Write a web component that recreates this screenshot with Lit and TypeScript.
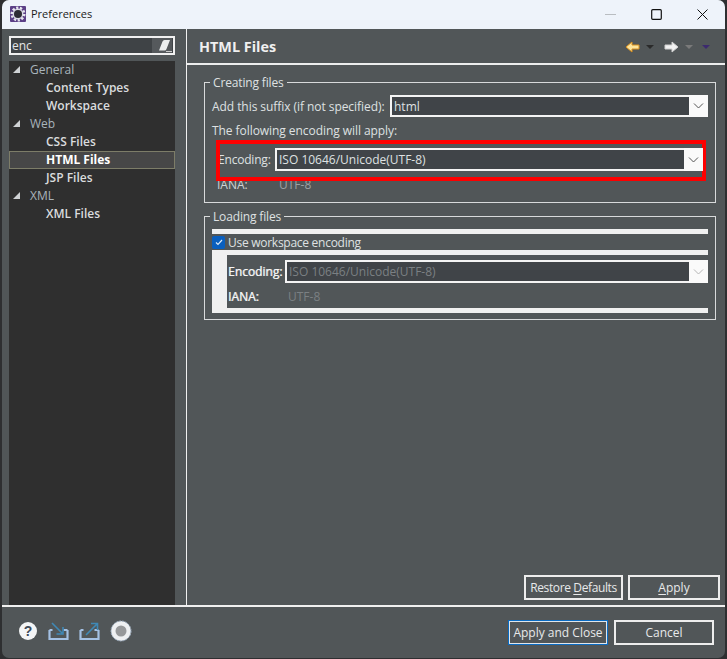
import { LitElement, html, css, svg } from "lit";
import { customElement } from "lit/decorators.js";

const chevron = html`<svg class="chev" width="11" height="6" viewBox="0 0 11 6"><path d="M1 .5l4.5 4.5L10 .5" fill="none" stroke="currentColor"/></svg>`;

const arrowDown = (color: string) => svg`<path d="M0 0h8l-4 4z" fill=${color}/>`;

@customElement("app-root")
export class AppRoot extends LitElement {
  static styles = css`
    :host {
      display: block;
      width: 727px;
      height: 659px;
      overflow: hidden;
      background: #2e2f31;
      font-family: "Open Sans", "Liberation Sans", sans-serif;
      font-size: 12px;
      color: #e4e6e7;
    }
    .window {
      margin-left: 2px;
      width: 723px;
      height: 658px;
      background: #515658;
      display: flex;
      flex-direction: column;
      border-radius: 7px;
      overflow: hidden;
    }
    .titlebar {
      height: 29px;
      flex: none;
      box-sizing: border-box;
      background: #eef3fa;
      display: flex;
      align-items: center;
      color: #1b1b1b;
      padding-left: 8px;
    }
    .titlebar .name { margin: -2px 0 0 5px; font-size: 11px; }
    .titlebar > svg { margin-top: -1px; }
    .winbtns { margin-left: auto; display: flex; }
    .winbtns div { width: 46px; height: 29px; display: flex; align-items: center; justify-content: center; }
    .main { flex: 1; display: flex; min-height: 0; }
    .left {
      width: 185px;
      flex: none;
      box-sizing: border-box;
      padding: 7px 0 0 7px;
      border-right: 1px solid #f0f0f0;
      display: flex;
      flex-direction: column;
    }
    .search {
      width: 166px;
      height: 19px;
      box-sizing: border-box;
      border: 2px solid #f0f0f0;
      background: #3f4346;
      display: flex;
      align-items: center;
      padding-left: 1px;
    }
    .search svg { margin-left: auto; margin-right: 1px; }
    .tree {
      margin-top: 6px;
      width: 166px;
      flex: 1;
      background: #2f2f2f;
    }
    .row { height: 18px; display: flex; align-items: center; box-sizing: border-box; padding-bottom: 2px; }
    .row .tw { width: 7px; margin: 0 10px 0 4px; display: flex; }
    .row.cat { color: #a9b4bb; }
    .row.leaf { padding-left: 37px; font-weight: 600; color: #dadcde; }
    .row.sel { background: #474747; outline: 1px solid #7d7d68; outline-offset: -1px; color: #fff; font-weight: 700; }
    .right { flex: 1; min-width: 0; display: flex; flex-direction: column; }
    .head {
      height: 36px;
      flex: none;
      box-sizing: border-box;
      display: flex;
      align-items: center;
      padding: 0 8px 0 12px;
      font-size: 14.4px;
      font-weight: 700;
      color: #f0f0f0;
      border-bottom: 2px solid #eceded;
    }
    .nav { margin-left: auto; margin-top: 2px; }
    .content { flex: 1; padding: 9px 9px 0 17px; display: flex; flex-direction: column; min-height: 0; }
    fieldset {
      margin: 0;
      padding: 0 7px;
      border: 1px solid #d8dadb;
      min-width: 0;
    }
    legend { padding: 0 3px; margin-left: -2px; line-height: 17px; color: #dfe1e2; letter-spacing: -0.15px; }
    .creating { height: 129px; box-sizing: border-box; }
    .loading { height: 112px; box-sizing: border-box; margin-top: 5px; }
    .combo {
      height: 22px;
      box-sizing: border-box;
      flex: 1;
      min-width: 0;
      display: flex;
      border: 2px solid #f4f4f4;
      border-right: none;
      background: #404448;
      color: #dfe1e2;
      align-items: center;
      padding-left: 2px;
    }
    .combo .text { flex: 1; white-space: nowrap; }
    .combo .btn {
      width: 19px;
      align-self: stretch;
      margin: -2px 0;
      background: #fafafa;
      color: #555;
      display: flex;
      align-items: center;
      justify-content: center;
    }
    .suffix { margin-top: 4px; height: 22px; display: flex; align-items: center; color: #dfe1e2; }
    .suffix .label { width: 178px; flex: none; letter-spacing: -0.06px; }
    .applies { margin-top: 3px; height: 20px; display: flex; align-items: center; color: #dfe1e2; letter-spacing: -0.06px; }
    .highlight {
      position: relative;
      z-index: 1;
      margin: 0 2px 0 4px;
      height: 41px;
      box-sizing: border-box;
      border: 4px solid #fe0000;
      display: flex;
      align-items: center;
    }
    .highlight::after {
      content: "";
      position: absolute;
      left: -4px;
      top: -4px;
      bottom: -4px;
      width: 4px;
      background: #fe0000;
    }
    .highlight .label { width: 57px; flex: none; margin-left: -2px; margin-top: -2px; color: #dfe1e2; letter-spacing: -0.2px; }
    .highlight .combo { height: 23px; margin-right: -1px; margin-top: -2px; }
    .iana { display: flex; height: 18px; align-items: center; padding-left: 5px; margin-top: -6px; color: #cfd2d4; }
    .iana .label { width: 62px; flex: none; }
    .iana .val { color: #9ca1a4; }
    .band { background: #f0f0f0; padding: 5px 0; margin-top: 4px; }
    .checkrow { background: #515658; height: 16px; display: flex; align-items: center; color: #dfe1e2; letter-spacing: -0.27px; }
    .box {
      width: 13px;
      height: 13px;
      border-radius: 2px;
      background: #0a5fbe;
      margin-right: 3px;
      display: flex;
      align-items: center;
      justify-content: center;
    }
    .disabled {
      margin: 5px 0 0 15px;
      background: #515658;
      height: 53px;
      padding-top: 5px;
      box-sizing: border-box;
    }
    .disabled .inner { display: flex; align-items: center; height: 23px; }
    .disabled .label { color: #f5f5f5; text-shadow: 0.6px 0.4px 0 rgba(255, 255, 255, 0.7); }
    .disabled .inner .label { width: 58px; flex: none; padding-left: 1px; box-sizing: border-box; }
    .disabled .combo { height: 23px; color: #7b8083; }
    .disabled .combo .btn { color: #b5b5b5; }
    .disabled .iana { padding-left: 1px; margin-top: 4px; }
    .disabled .iana .label { width: 60px; }
    .disabled .iana .val { color: #7b8083; }
    .actions { margin: auto -4px 0 0; display: flex; justify-content: flex-end; gap: 5px; padding-bottom: 5px; }
    button {
      font: inherit;
      color: #e8e9ea;
      background: #515658;
      border: 2px solid #ededed;
      height: 25px;
      padding: 0;
      box-sizing: border-box;
    }
    button u { text-underline-offset: 2px; }
    .restore { width: 99px; letter-spacing: -0.38px; }
    .apply { width: 92px; }
    .bottom {
      height: 53px;
      flex: none;
      box-sizing: border-box;
      border-top: 2px solid #f0f0f0;
      display: flex;
      align-items: center;
      padding: 0 11px 0 16px;
    }
    .icons { display: flex; align-items: center; gap: 9px; margin-top: -3px; }
    .bottom .btns { margin-left: auto; display: flex; gap: 6px; }
    .applyclose { width: 100px; border-color: #dfe6ec; outline: 1px solid #0a6cc4; outline-offset: -1px; }
    .cancel { width: 100px; }
  `;

  private tray(up: boolean) {
    const arrow = up ? "M7 14L18 3M12 2.5h6.5v6.5" : "M4 2l10 10M15 6v7H8.5";
    return html`<svg width="22" height="20" viewBox="0 0 22 20">
      <path d="M1.5 9v9h18V9M1.5 9h3M15.5 9h4" fill="none" stroke="#a4c1e4" stroke-width="2.2"/>
      <path d=${arrow} fill="none" stroke="#3f88b5" stroke-width="1.6"/>
    </svg>`;
  }

  render() {
    return html`
      <div class="window">
        <div class="titlebar">
          <svg width="16" height="16" viewBox="0 0 16 16">
            <rect width="16" height="16" rx="1" fill="#5b3f86"/>
            <circle cx="8" cy="8" r="6.2" fill="none" stroke="#e6e6ee" stroke-width="2.6" stroke-dasharray="2.2 1.6"/>
            <circle cx="8" cy="8" r="5.4" fill="#d9d9e4"/>
            <circle cx="8" cy="8" r="4" fill="#2c2b33"/>
          </svg>
          <span class="name">Preferences</span>
          <div class="winbtns">
            <div><svg width="11" height="2"><rect width="11" height="1" fill="#b9bdc1"/></svg></div>
            <div><svg width="11" height="11"><rect x=".7" y=".7" width="9.6" height="9.6" rx="1" fill="none" stroke="#111" stroke-width="1.2"/></svg></div>
            <div><svg width="11" height="11"><path d="M.5.5l10 10M10.5.5l-10 10" stroke="#111" fill="none"/></svg></div>
          </div>
        </div>
        <div class="main">
          <div class="left">
            <div class="search">
              enc
              <svg width="20" height="15" viewBox="0 0 20 15">
                <rect width="20" height="15" fill="#55595c"/>
                <path d="M7 12.5L10.5 3.5Q11 2 12.5 2H18L14.5 11Q14 12.5 12.5 12.5z" fill="#eceeee"/>
                <path d="M14 13.5h6" stroke="#ccc"/>
              </svg>
            </div>
            <div class="tree">
              ${this.cat("General")}
              ${this.leaf("Content Types")}
              ${this.leaf("Workspace")}
              ${this.cat("Web")}
              ${this.leaf("CSS Files")}
              ${this.leaf("HTML Files", true)}
              ${this.leaf("JSP Files")}
              ${this.cat("XML")}
              ${this.leaf("XML Files")}
            </div>
          </div>
          <div class="right">
            <div class="head">
              HTML Files
              <svg class="nav" width="92" height="16" viewBox="0 0 92 16">
                <path d="M1 8l6-5v3h7v4H7v3z" fill="#fde49b" stroke="#d98f1d"/>
                <g transform="translate(21 6)">${arrowDown("#2a2a2a")}</g>
                <path d="M53 8l-6-5v3h-7v4h7v3z" fill="#f2f2f2" stroke="#cfcfcf"/>
                <g transform="translate(60 6)">${arrowDown("#7a7a7a")}</g>
                <g transform="translate(77 6)">${arrowDown("#3c2a6e")}</g>
              </svg>
            </div>
            <div class="content">
              <fieldset class="creating">
                <legend>Creating files</legend>
                <div class="suffix">
                  <span class="label">Add this suffix (if not specified):</span>
                  <div class="combo"><span class="text">html</span><span class="btn">${chevron}</span></div>
                </div>
                <div class="applies">The following encoding will apply:</div>
                <div class="highlight">
                  <span class="label">Encoding:</span>
                  <div class="combo"><span class="text">ISO 10646/Unicode(UTF-8)</span><span class="btn">${chevron}</span></div>
                </div>
                <div class="iana"><span class="label">IANA:</span><span class="val">UTF-8</span></div>
              </fieldset>
              <fieldset class="loading">
                <legend>Loading files</legend>
                <div class="band">
                  <div class="checkrow">
                    <span class="box"><svg width="8" height="7" viewBox="0 0 8 7"><path d="M1 3.5l2 2L7 1" fill="none" stroke="#dce9f7" stroke-width="1.2"/></svg></span>
                    Use workspace encoding
                  </div>
                  <div class="disabled">
                    <div class="inner">
                      <span class="label">Encoding:</span>
                      <div class="combo"><span class="text">ISO 10646/Unicode(UTF-8)</span><span class="btn">${chevron}</span></div>
                    </div>
                    <div class="iana"><span class="label">IANA:</span><span class="val">UTF-8</span></div>
                  </div>
                </div>
              </fieldset>
              <div class="actions">
                <button class="restore">Restore <u>D</u>efaults</button>
                <button class="apply"><u>A</u>pply</button>
              </div>
            </div>
          </div>
        </div>
        <div class="bottom">
          <div class="icons">
            <svg width="21" height="20" viewBox="0 0 21 20">
              <circle cx="10" cy="10" r="9" fill="#f4f5f6"/>
              <text x="10" y="15" text-anchor="middle" font-size="14" font-weight="700" font-family="Liberation Sans" fill="#3f4a58">?</text>
            </svg>
            ${this.tray(false)}
            ${this.tray(true)}
            <svg width="22" height="22" viewBox="0 0 22 22">
              <circle cx="11" cy="11" r="10" fill="#eef0f2" stroke="#9fb0c4" stroke-dasharray="2 1"/>
              <circle cx="11" cy="11" r="5.5" fill="#96989a"/>
            </svg>
          </div>
          <div class="btns">
            <button class="applyclose">Apply and Close</button>
            <button class="cancel">Cancel</button>
          </div>
        </div>
      </div>
    `;
  }

  private cat(label: string) {
    return html`<div class="row cat">
      <span class="tw"><svg width="7" height="7"><path d="M7 0v7H0z" fill="#cfd2d4"/></svg></span>${label}
    </div>`;
  }

  private leaf(label: string, selected = false) {
    return html`<div class="row leaf ${selected ? "sel" : ""}">${label}</div>`;
  }
}
